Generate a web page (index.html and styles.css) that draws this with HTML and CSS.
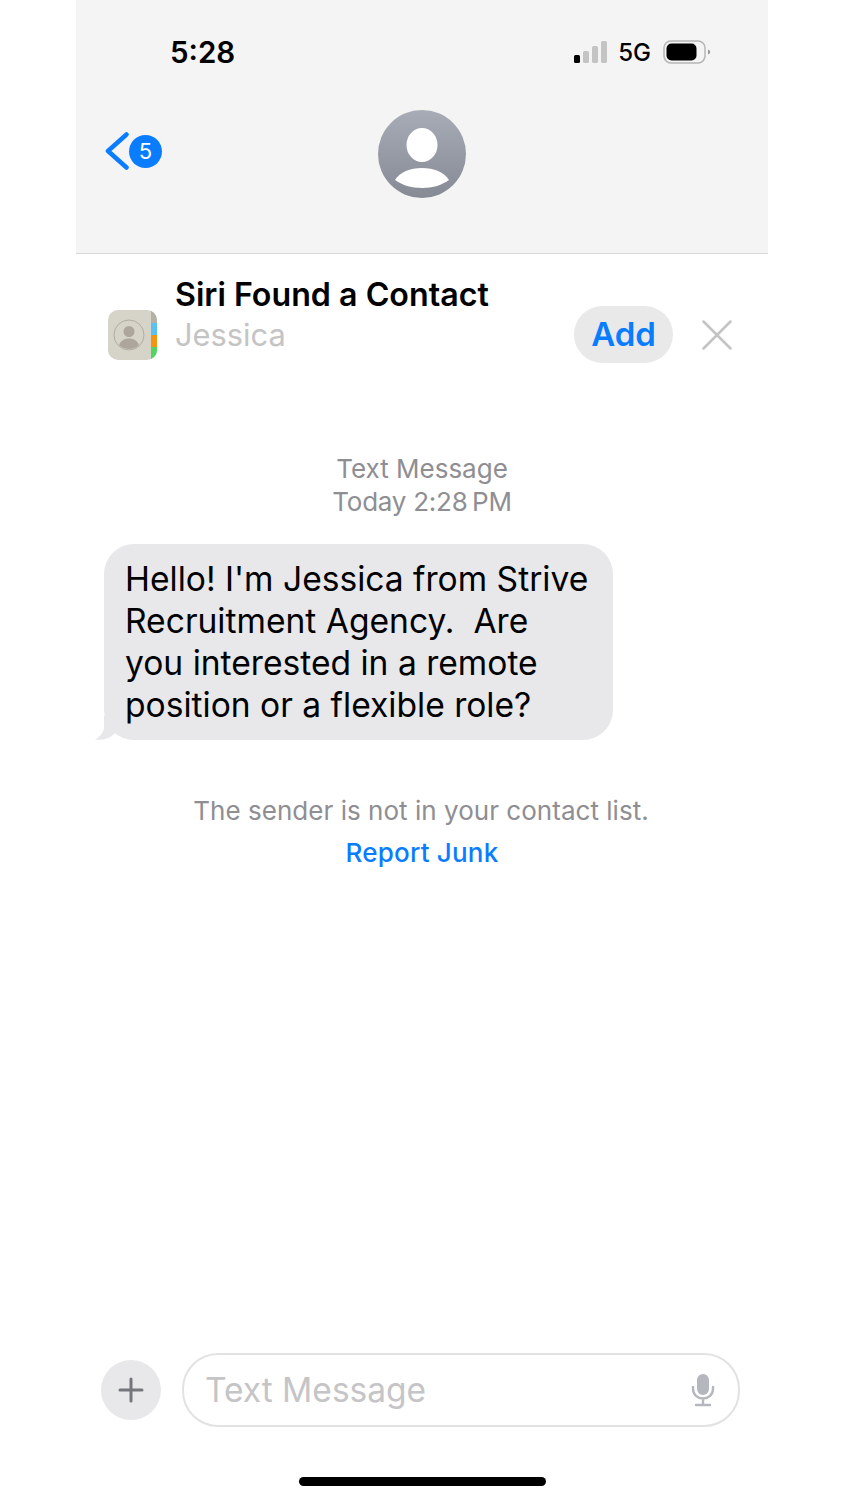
FILE: index.html
```html
<!DOCTYPE html>
<html>
<head>
  <meta charset="utf-8">
  <meta name="viewport" content="width=device-width, initial-scale=1.0">
  <title>Messages</title>
  <link rel="stylesheet" href="styles.css">
</head>
<body>
  <div class="screen">
    <header class="top">
      <div class="status-bar">
        <span class="time">5:28</span>
        <div class="status-icons">
          <svg class="signal" width="34" height="22" viewBox="0 0 34 22">
            <rect x="0" y="14" width="6" height="8" rx="1.5" fill="#000"/>
            <rect x="9" y="10" width="6" height="12" rx="1.5" fill="#c4c4c4"/>
            <rect x="18" y="5" width="6" height="17" rx="1.5" fill="#c4c4c4"/>
            <rect x="27" y="0" width="6" height="22" rx="1.5" fill="#c4c4c4"/>
          </svg>
          <span class="network">5G</span>
          <svg class="battery" width="48" height="24" viewBox="0 0 48 24">
            <rect x="1" y="1" width="41" height="22" rx="7" fill="none" stroke="#b5b5b5" stroke-width="1.5"/>
            <rect x="3.5" y="3.5" width="30" height="17" rx="5" fill="#000"/>
            <path d="M45 9.5c1.5.5 2.2 1.4 2.2 2.5s-.7 2-2.2 2.5z" fill="#9a9a9a"/>
          </svg>
        </div>
      </div>
      <div class="nav-row">
        <div class="back">
          <svg width="26" height="38" viewBox="0 0 26 38">
            <path d="M22.5 2.5 4 19l18.5 16.500" fill="none" stroke="#0a7cff" stroke-width="4.500" stroke-linecap="round" stroke-linejoin="round"/>
          </svg>
          <span class="count">5</span>
        </div>
        <div class="avatar">
          <svg width="88" height="88" viewBox="0 0 88 88">
            <defs>
              <linearGradient id="avatarFill" x1="0" y1="0" x2="0" y2="1">
                <stop offset="0" stop-color="#a8acb7"/>
                <stop offset="1" stop-color="#868a95"/>
              </linearGradient>
              <clipPath id="avatarClip"><circle cx="44" cy="44" r="44"/></clipPath>
            </defs>
            <circle cx="44" cy="44" r="44" fill="url(#avatarFill)"/>
            <ellipse cx="44" cy="35" rx="15.500" ry="17" fill="#fff"/>
            <path d="M17 70c5-8 15-12 27-12s22 4 27 12c-7 5-16 8-27 8s-20-3-27-8z" fill="#fff" clip-path="url(#avatarClip)"/>
          </svg>
        </div>
      </div>
    </header>

    <section class="siri">
      <svg class="contacts-icon" width="50" height="50" viewBox="0 0 50 50">
        <defs>
          <clipPath id="iconClip"><rect width="49" height="50" rx="10"/></clipPath>
        </defs>
        <g clip-path="url(#iconClip)">
          <rect width="50" height="50" fill="#d6d3c8"/>
          <rect x="43" y="0" width="7" height="13" fill="#b3b0a6"/>
          <rect x="43" y="13" width="7" height="12" fill="#5ac1f5"/>
          <rect x="43" y="25" width="7" height="12" fill="#f5940f"/>
          <rect x="43" y="37" width="7" height="13" fill="#4fd660"/>
          <circle cx="21" cy="25" r="15" fill="none" stroke="#b1aca2" stroke-width="1"/>
          <circle cx="21" cy="21.500" r="5.500" fill="#aca69d"/>
          <path d="M11 35c2-4.500 5.500-6.500 10-6.500s8 2 10 6.500c-2.500 2.500-6 4-10 4s-7.500-1.500-10-4z" fill="#aca69d"/>
        </g>
      </svg>
      <div class="siri-text">
        <h2>Siri Found a Contact</h2>
        <p>Jessica</p>
      </div>
      <button class="add" type="button">Add</button>
      <svg class="dismiss" width="30" height="30" viewBox="0 0 30 30">
        <path d="M1.500 1.500l27 27M28.500 1.500l-27 27" stroke="#c3c3c3" stroke-width="2.500" stroke-linecap="round"/>
      </svg>
    </section>

    <main class="thread">
      <div class="stamp">
        <div>Text Message</div>
        <div class="stamp-date">Today 2:28&#8201;PM</div>
      </div>
      <div class="bubble">
        Hello! I'm Jessica from Strive<br>
        Recruitment Agency.&nbsp; Are<br>
        you interested in a remote<br>
        position or a flexible role?
        <svg class="tail" width="30" height="24" viewBox="0 0 30 24">
          <path d="M10 0v10c0 6-3 10-9 13.500 7 .8 14-.5 18-4.500l11-8V0z" fill="#e8e8ea"/>
        </svg>
      </div>
      <div class="notice">
        <p>The sender is not in your contact list.</p>
        <a href="#">Report Junk</a>
      </div>
    </main>

    <footer class="composer">
      <div class="input-row">
        <button class="plus" type="button">
          <svg width="26" height="26" viewBox="0 0 26 26">
            <path d="M13 2v22M2 13h22" stroke="#75767c" stroke-width="3" stroke-linecap="round"/>
          </svg>
        </button>
        <div class="field">
          <span>Text Message</span>
          <svg width="24" height="34" viewBox="0 0 24 34">
            <rect x="6" y="1" width="12" height="21" rx="6" fill="#b4b7be"/>
            <path d="M2 14v2c0 5.500 4.500 9.500 10 9.500s10-4 10-9.500v-2M12 26v5M5 32h14" fill="none" stroke="#b4b7be" stroke-width="2.400" stroke-linecap="round"/>
          </svg>
        </div>
      </div>
      <div class="home-bar"></div>
    </footer>
  </div>
</body>
</html>
```

FILE: styles.css
```css
body {
  font-family: 'Inter', 'Liberation Sans', sans-serif;
  margin: 0;
  padding: 0;
  background-color: #fff;
}

.screen {
  width: 692px;
  height: 1500px;
  margin: 0 auto;
  display: flex;
  flex-direction: column;
}

.top {
  height: 253px;
  background-color: #f4f4f4;
  border-bottom: 1px solid #d6d6d6;
}

.status-bar {
  height: 104px;
  display: flex;
  align-items: center;
  justify-content: space-between;
  padding: 0 57px 0 94px;
}

.time {
  font-size: 29.500px;
  font-weight: 600;
  color: #000;
}

.status-icons {
  display: flex;
  align-items: center;
  gap: 11px;
}

.network {
  font-size: 24px;
  font-weight: 500;
  color: #000;
  margin-left: -1px;
}

.battery {
  margin-left: 1px;
}

.nav-row {
  display: flex;
  justify-content: center;
  position: relative;
  padding-top: 6px;
}

.back {
  position: absolute;
  left: 28px;
  top: 28px;
  display: flex;
  align-items: center;
}

.count {
  width: 33px;
  height: 33px;
  margin-left: -1px;
  border-radius: 50%;
  background-color: #0a7cff;
  color: #fff;
  font-size: 22px;
  line-height: 33px;
  text-align: center;
}

.avatar {
  height: 88px;
}

.siri {
  display: flex;
  align-items: flex-end;
  padding: 20px 36px 0 32px;
}

.contacts-icon {
  margin-bottom: 3px;
}

.siri-text {
  flex: 1;
  margin-left: 17px;
  padding-bottom: 9px;
}

.siri-text h2 {
  margin: 0;
  font-size: 32.200px;
  line-height: 42px;
  font-weight: 600;
  color: #000;
}

.siri-text p {
  margin: 0;
  font-size: 30.800px;
  line-height: 38px;
  color: #c4c4c4;
}

.add {
  width: 99px;
  height: 57px;
  border: none;
  border-radius: 29px;
  background-color: #e9e9e9;
  color: #0a7cff;
  font-family: inherit;
  font-size: 33px;
  font-weight: 600;
  padding: 0 0 2px;
}

.dismiss {
  margin: 0 0 13px 29px;
}

.thread {
  flex: 1;
  padding: 89px 0 0 28px;
}

.stamp {
  text-align: center;
  margin-left: -28px;
  font-size: 26px;
  line-height: 33px;
  color: #8e8e93;
}

.stamp-date {
  letter-spacing: -0.25px;
}

.bubble {
  position: relative;
  width: 466px;
  margin-top: 26px;
  padding: 14px 22px 14px 21px;
  border-radius: 30px;
  background-color: #e8e8ea;
  font-size: 33.600px;
  line-height: 42px;
  color: #000;
  white-space: nowrap;
}

.tail {
  position: absolute;
  left: -10px;
  bottom: 0;
}

.notice {
  margin: 50px 0 0 -28px;
  text-align: center;
  font-size: 26px;
  line-height: 42px;
}

.notice p {
  margin: 0;
  padding-right: 2px;
  color: #8e8e93;
  letter-spacing: 0.03px;
}

.notice a {
  color: #0a7cff;
  font-weight: 500;
  letter-spacing: 0.2px;
  text-decoration: none;
}

.composer {
  height: 147px;
  padding: 0 28px 0 25px;
}

.input-row {
  display: flex;
  align-items: center;
  gap: 21px;
}

.plus {
  width: 60px;
  height: 60px;
  flex-shrink: 0;
  border: none;
  border-radius: 50%;
  background-color: #e8e8ea;
  padding: 0;
  display: flex;
  align-items: center;
  justify-content: center;
}

.field {
  flex: 1;
  height: 70px;
  display: flex;
  align-items: center;
  justify-content: space-between;
  padding: 0 23px 0 21px;
  border: 2px solid #e2e2e4;
  border-radius: 36px;
  font-size: 33.500px;
  color: #c5c5c7;
}

.home-bar {
  width: 247px;
  height: 9px;
  margin: 50px 0 0 198px;
  border-radius: 5px;
  background-color: #000;
}
```
